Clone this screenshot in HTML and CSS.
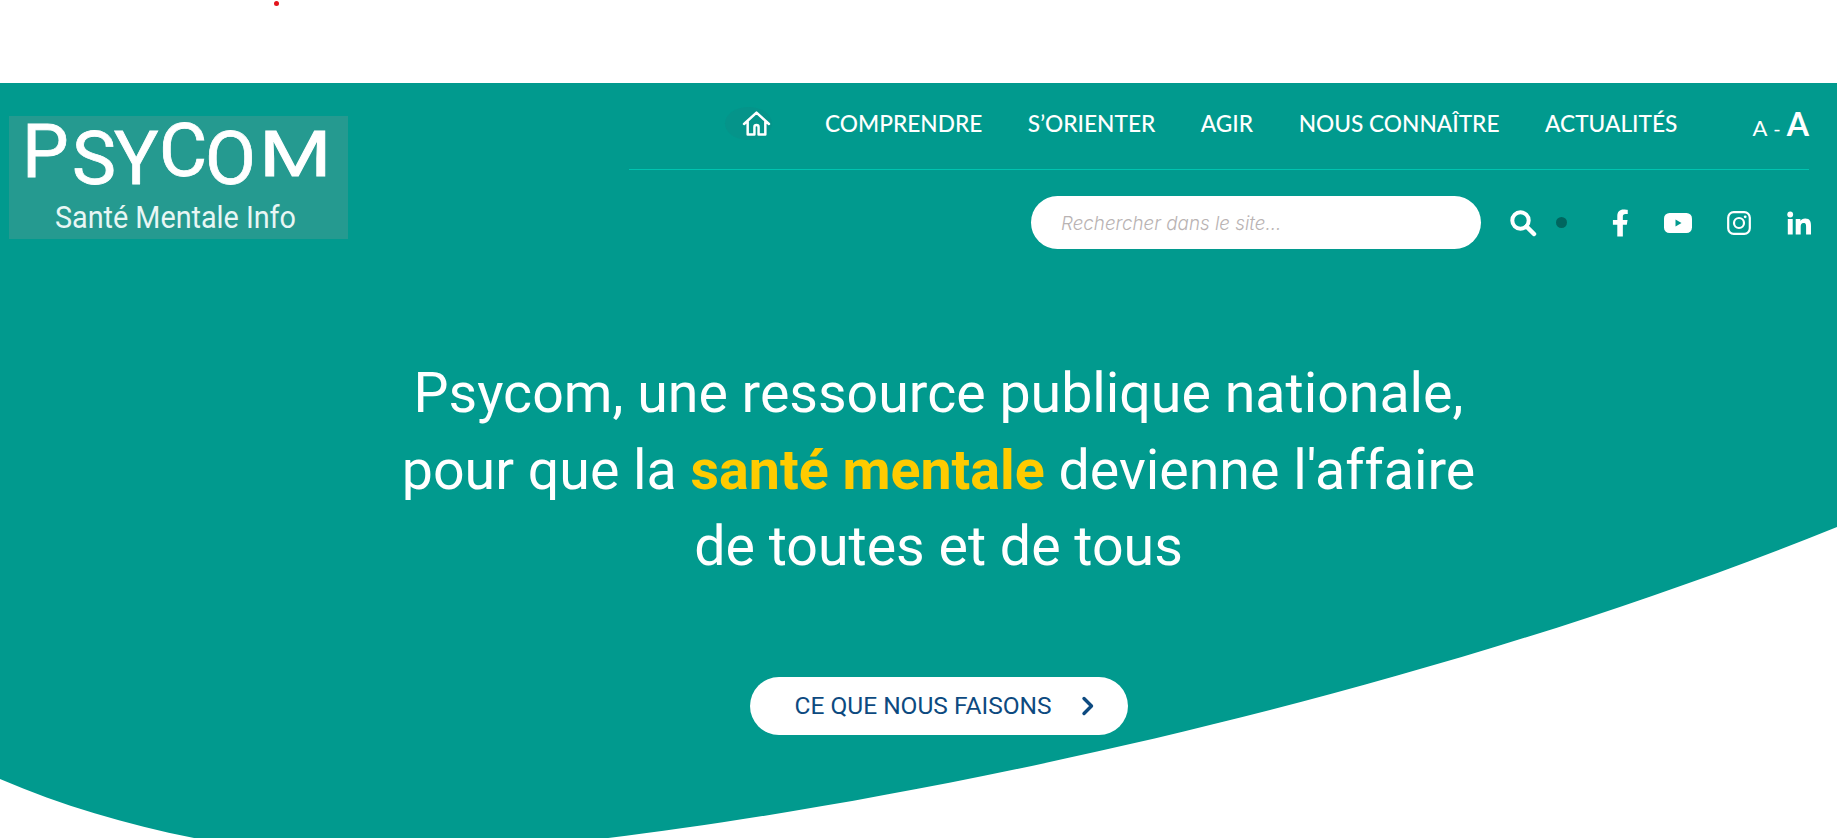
FILE: index.html
```html
<!DOCTYPE html>
<html lang="fr">
<head>
<meta charset="utf-8">
<title>Psycom</title>
<link rel="stylesheet" href="styles.css">
</head>
<body>
<div class="topbar"><span class="red-dot"></span></div>
<section class="hero">
  <svg class="curve" viewBox="0 0 1837 755" preserveAspectRatio="none" aria-hidden="true"><path d="M0 696 C75 728 155 750 240 763 C345 778 470 773 600 756 C900 720 1400 620 1837 444 V755 H0 Z"/></svg>
  <header class="head">
    <svg class="logo" viewBox="0 0 339 123" width="339" height="123" role="img" aria-label="Psycom Santé Mentale Info">
      <text class="logo-big" x="13 63 105 150 196" y="61 68 68 60 68">PSYCO</text>
      <text class="logo-big logo-m" transform="translate(250 60) scale(1.32 1)">M</text>
      <text class="logo-sub" x="46" y="112" textLength="241" lengthAdjust="spacingAndGlyphs">Santé Mentale Info</text>
    </svg>
    <div class="head-right">
      <nav class="nav">
        <a class="home">
          <svg viewBox="0 0 28 26" width="31" height="27"><path d="M2 13.500 14 2.500l12 11M5.500 11v12.500h6.500v-7a2 2 0 0 1 4 0v7h6.500V11" fill="none" stroke="#fff" stroke-width="2.400" stroke-linejoin="round" stroke-linecap="round"/></svg>
        </a>
        <a class="nav-link">COMPRENDRE</a>
        <a class="nav-link">S’ORIENTER</a>
        <a class="nav-link">AGIR</a>
        <a class="nav-link">NOUS CONNAÎTRE</a>
        <a class="nav-link">ACTUALITÉS</a>
        <span class="sizer"><span class="a-sm">A</span> <span class="a-dash">-</span> <span class="a-lg">A</span></span>
      </nav>
      <div class="tools">
        <div class="search">Rechercher dans le site...</div>
        <svg class="i-search" viewBox="0 0 28 28" width="28" height="28"><circle cx="11.500" cy="11.500" r="8.200" fill="none" stroke="#fff" stroke-width="4"/><path d="M17.500 17.500 25 25" stroke="#fff" stroke-width="4.500" stroke-linecap="round"/></svg>
        <span class="dot"></span>
        <div class="social">
          <svg viewBox="0 0 16 28" width="16" height="28"><path d="M14.800 15.700l.75-4.800h-4.700V7.700c0-1.400.65-2.600 2.800-2.600h2.100V.9S13.200.500 11.500.500C7.700.500 5.300 2.800 5.300 7v3.900H.9v4.800h4.400V27.500h5.550V15.700z" fill="#fff"/></svg>
          <svg viewBox="0 0 28 20" width="28" height="20"><rect width="28" height="20" rx="5.500" fill="#fff"/><path d="M11.500 6.500v7l6-3.500z" fill="#019a8e"/></svg>
          <svg viewBox="0 0 24 24" width="24" height="24"><rect x="1.200" y="1.200" width="21.600" height="21.600" rx="5.500" fill="none" stroke="#fff" stroke-width="2.200"/><circle cx="12" cy="12" r="5" fill="none" stroke="#fff" stroke-width="2.200"/><circle cx="18.200" cy="5.800" r="1.400" fill="#fff"/></svg>
          <svg viewBox="0 0 24 24" width="24" height="24"><circle cx="3.200" cy="3.500" r="2.900" fill="#fff"/><rect x=".8" y="8" width="4.900" height="15.500" fill="#fff"/><path d="M8.700 8h4.700v2.100c.7-1.300 2.400-2.500 4.800-2.500 5 0 5.800 3.300 5.800 7.500v8.400h-4.900v-7.500c0-1.800 0-4-2.500-4s-2.900 1.900-2.900 3.900v7.600H8.700z" fill="#fff"/></svg>
        </div>
      </div>
    </div>
  </header>
  <div class="intro">
    <h1 class="title">Psycom, une ressource publique nationale,<br>pour que la <strong class="hl">santé mentale</strong> devienne l'affaire<br>de toutes et de tous</h1>
    <a class="cta">CE QUE NOUS FAISONS
      <svg viewBox="0 0 14 20" width="14" height="20"><path d="M3 2.500 10.500 10 3 17.500" fill="none" stroke="#0d4a80" stroke-width="3.400" stroke-linecap="round" stroke-linejoin="round"/></svg>
    </a>
  </div>
</section>
</body>
</html>
```
FILE: styles.css
```css
* { box-sizing: border-box; }
html, body { margin: 0; height: 100%; overflow: hidden; background: #fff; }
body { font-family: "Open Sans", "Liberation Sans", sans-serif; }
.topbar { height: 83px; position: relative; }
.red-dot { position: absolute; left: 274px; top: 1px; width: 5px; height: 5px; border-radius: 50%; background: #e3141c; }
.hero { position: relative; height: 755px; background: #019a8e; color: #fff; overflow: hidden; }
.curve { position: absolute; inset: 0; width: 100%; height: 100%; }
.curve path { fill: #fff; }
.head { position: relative; display: flex; justify-content: space-between; align-items: flex-start; padding: 0 28px 0 9px; }
.logo { margin-top: 33px; background: #259a90; flex: none; }
.logo-big { font-family: "Roboto", sans-serif; font-size: 74px; font-weight: 400; fill: #fff; stroke: #fff; stroke-width: .8px; }
.logo-big.logo-m { font-size: 63px; }
.logo-sub { font-family: "Roboto", sans-serif; font-size: 32px; fill: #e8f6f4; }
.head-right { width: 1180px; }
.nav { height: 87px; border-bottom: 1px solid #00c4b0; display: flex; align-items: center; padding-bottom: 6px; font-family: "Lato", "Open Sans", sans-serif; }
.home { width: 47px; height: 33px; margin-left: 96px; display: flex; align-items: center; justify-content: flex-end; border-radius: 50%; background: #05948a; flex: none; }
.nav-link { font-size: 22.700px; font-weight: 500; margin-left: 45.500px; white-space: nowrap; }
.home + .nav-link { margin-left: 53px; }
.sizer { margin-left: auto; white-space: nowrap; display: flex; align-items: baseline; gap: 6px; }
.a-sm { font-size: 22px; }
.a-dash { font-size: 20px; }
.a-lg { font-size: 32px; font-weight: 700; }
.tools { display: flex; align-items: center; margin-top: 26px; padding-left: 402px; }
.search { flex: none; width: 450px; height: 53px; border-radius: 27px; background: #fff; color: #b9b3b3; font-family: "Inter", sans-serif; font-style: italic; font-weight: 300; font-size: 18.800px; line-height: 55px; padding-left: 30px; }
.i-search { flex: none; margin-left: 28px; }
.dot { flex: none; width: 11px; height: 11px; border-radius: 50%; background: #00665f; margin-left: 19px; }
.social { display: flex; align-items: center; gap: 35.500px; margin-left: 45px; }
.social svg { flex: none; }
.intro { position: relative; display: flex; flex-direction: column; align-items: center; padding-left: 40px; margin-top: 107px; }
.title { margin: 0; font-family: "Roboto", sans-serif; font-weight: 400; font-size: 55.500px; line-height: 76.500px; text-align: center; }
.hl { color: #ffcb00; font-weight: 700; }
.cta { margin-top: 91px; width: 378px; height: 58px; border-radius: 29px; background: #fff; color: #0d4a80; display: flex; align-items: center; justify-content: center; gap: 29px; padding-left: 12px; font-family: "Roboto", sans-serif; font-size: 24.500px; }
```
